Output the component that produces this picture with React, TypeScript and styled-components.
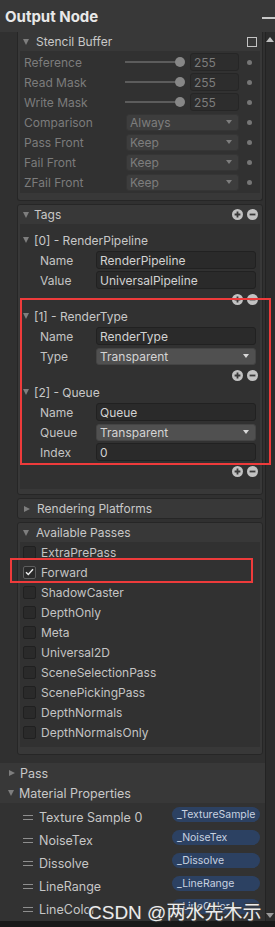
import React from 'react';
import styled, { createGlobalStyle } from 'styled-components';

const GlobalStyle = createGlobalStyle`
  html, body {
    margin: 0;
    padding: 0;
    background: #1e1e1e;
  }
  body {
    font-family: Inter, "Noto Sans", sans-serif;
    font-size: 12px;
  }
  * {
    box-sizing: border-box;
  }
`;

const Window = styled.div`
  position: relative;
  width: 275px;
  height: 927px;
  display: flex;
  flex-direction: column;
  background: #2f2f2f;
  color: #c4c4c4;
  overflow: hidden;
`;

const TitleBar = styled.div`
  flex: none;
  height: 32px;
  display: flex;
  align-items: center;
  justify-content: space-between;
  padding-left: 5px;
  background: #383838;
`;

const Title = styled.h1`
  margin: 0;
  font-size: 15px;
  font-weight: 700;
  color: #e8e8e8;
`;

const CollapseDash = styled.span`
  width: 13px;
  height: 2px;
  margin-top: 4px;
  background: #c8c8c8;
`;

const Body = styled.div`
  flex: 1;
  min-height: 0;
  display: flex;
`;

const ScrollView = styled.div`
  width: 265px;
  flex: none;
  display: flex;
  flex-direction: column;
  overflow: hidden;
`;

const Scrollbar = styled.div`
  flex: 1;
  display: flex;
  flex-direction: column;
  justify-content: space-between;
  align-items: flex-end;
  padding: 5px 1px 3px 0;
  background: #2c2c2c;
  border-left: 1px solid #232323;
`;

const ScrollArrow = styled.span<{ $down?: boolean }>`
  width: 0;
  height: 0;
  border-left: 4px solid transparent;
  border-right: 4px solid transparent;
  ${(p) => (p.$down ? 'border-top: 5px solid #9a9a9a;' : 'border-bottom: 5px solid #c0c0c0;')}
`;

const BottomStrip = styled.div`
  flex: none;
  height: 6px;
  background: #191919;
`;

const PanelArea = styled.div`
  display: flex;
  flex-direction: column;
  gap: 3px;
  padding: 0 2px 8px 17px;
  background: #303030;
`;

const Panel = styled.section<{ $cut?: boolean }>`
  background: #383838;
  border: 1px solid #262626;
  border-radius: 3px;
  ${(p) => p.$cut && 'border-top: none; border-top-left-radius: 0; border-top-right-radius: 0;'}
`;

const PanelHeader = styled.div`
  height: 19px;
  display: flex;
  align-items: center;
  padding: 0 4px 0 5px;
`;

const Arrow = styled.span<{ $open?: boolean }>`
  flex: none;
  width: 0;
  height: 0;
  ${(p) =>
    p.$open
      ? 'border-left: 3.5px solid transparent; border-right: 3.5px solid transparent; border-top: 6px solid #7e7e7e;'
      : 'border-top: 3.5px solid transparent; border-bottom: 3.5px solid transparent; border-left: 6px solid #7e7e7e; margin-left: 1px;'}
`;

const HeaderText = styled.span<{ $gap?: number }>`
  margin-left: ${(p) => p.$gap ?? 7}px;
  color: #c8c8c8;
  white-space: nowrap;
`;

const HeaderEnd = styled.div`
  margin-left: auto;
  display: flex;
  align-items: center;
  gap: 4px;
`;

const ToggleBox = styled.span`
  width: 10px;
  height: 10px;
  margin-right: 1px;
  border: 1px solid #c4c4c4;
`;

const PanelInner = styled.div<{ $pt?: number; $pb?: number; $mb?: number }>`
  margin: 0 2px ${(p) => p.$mb ?? 6}px 2px;
  padding: ${(p) => p.$pt ?? 1}px 0 ${(p) => p.$pb ?? 1}px 0;
  background: #313131;
`;

const PropRow = styled.div<{ $indent: number }>`
  height: 20px;
  display: flex;
  align-items: center;
  padding-left: ${(p) => p.$indent}px;
`;

const PropLabel = styled.span<{ $width: number; $dim?: boolean }>`
  flex: none;
  width: ${(p) => p.$width}px;
  color: ${(p) => (p.$dim ? '#7c7c7c' : '#c4c4c4')};
  white-space: nowrap;
`;

const Control = styled.div`
  width: 114px;
  flex: none;
  display: flex;
  align-items: center;
`;

const Track = styled.span`
  width: 52px;
  height: 2px;
  background: #5c5c5c;
`;

const Knob = styled.span`
  width: 10px;
  height: 10px;
  margin-left: -2px;
  border-radius: 50%;
  background: #878787;
`;

const NumberField = styled.span`
  width: 49px;
  height: 18px;
  margin-left: 5px;
  display: flex;
  align-items: center;
  padding-left: 3px;
  background: #2d2d2d;
  border: 1px solid #262626;
  border-radius: 3px;
  color: #7c7c7c;
`;

const Dot = styled.span`
  width: 5px;
  height: 5px;
  margin-left: 8px;
  border-radius: 50%;
  background: #767676;
`;

const TextField = styled.span`
  width: 160px;
  height: 18px;
  display: flex;
  align-items: center;
  padding-left: 3px;
  background: #2a2a2a;
  border: 1px solid #212121;
  border-radius: 3px;
  color: #d2d2d2;
`;

const Dropdown = styled.span<{ $dim?: boolean; $width: number }>`
  width: ${(p) => p.$width}px;
  height: 17px;
  margin-left: ${(p) => (p.$dim ? 1 : 0)}px;
  display: flex;
  align-items: center;
  justify-content: space-between;
  padding: 0 6px 0 3px;
  background: ${(p) => (p.$dim ? '#3d3d3d' : '#505050')};
  border: 1px solid ${(p) => (p.$dim ? '#353535' : '#444444')};
  border-radius: 3px;
  color: ${(p) => (p.$dim ? '#7e7e7e' : '#d4d4d4')};

  &::after {
    content: '';
    border-left: 3.5px solid transparent;
    border-right: 3.5px solid transparent;
    border-top: 4px solid ${(p) => (p.$dim ? '#7e7e7e' : '#d8d8d8')};
  }
`;

const ButtonRow = styled.div`
  height: 16px;
  display: flex;
  justify-content: flex-end;
  align-items: flex-start;
  gap: 4px;
  padding: 4px 2px 0 0;
`;

const ItemHeader = styled.div`
  height: 20px;
  display: flex;
  align-items: center;
  padding-left: 3px;
`;

const PassRow = styled.div`
  height: 20px;
  display: flex;
  align-items: center;
  padding-left: 3px;
  color: #c4c4c4;
`;

const CheckBox = styled.span<{ $on?: boolean }>`
  width: 13px;
  height: 13px;
  margin-right: 5px;
  display: flex;
  align-items: center;
  justify-content: center;
  background: #2a2a2a;
  border: 1px solid ${(p) => (p.$on ? '#5e5e5e' : '#202020')};
  border-radius: 2px;
`;

const Section = styled.div`
  background: #383838;
`;

const SectionHeader = styled.div`
  height: 20px;
  display: flex;
  align-items: center;
  padding-left: 8px;
  font-size: 12.5px;
`;

const PropertyList = styled.div`
  flex: 1;
  padding-top: 3px;
  background: #323232;
`;

const PropertyRow = styled.div`
  height: 23px;
  display: flex;
  align-items: center;
  padding: 0 5px 0 23px;
  font-size: 12.5px;
  color: #c6c6c6;
`;

const Grip = styled.span`
  width: 10px;
  height: 5px;
  margin-right: 6px;
  border-top: 1.5px solid #8e8e8e;
  border-bottom: 1.5px solid #8e8e8e;
`;

const RefPill = styled.span`
  margin-left: auto;
  align-self: flex-start;
  margin-top: 1px;
  width: 88px;
  height: 15px;
  display: flex;
  align-items: center;
  padding-left: 5px;
  border-radius: 8px;
  background: #2c4162;
  color: #c8d2e0;
  font-size: 10.5px;
  white-space: nowrap;
  overflow: hidden;
`;

const Highlight = styled.div<{ $x: number; $y: number; $w: number; $h: number }>`
  position: absolute;
  left: ${(p) => p.$x}px;
  top: ${(p) => p.$y}px;
  width: ${(p) => p.$w}px;
  height: ${(p) => p.$h}px;
  border: 2px solid #ee3b3b;
  pointer-events: none;
`;

const Watermark = styled.div`
  position: absolute;
  left: 88px;
  top: 897px;
  font-family: "Liberation Sans", "Noto Sans CJK SC", sans-serif;
  font-size: 19px;
  color: #ececec;
  white-space: nowrap;
  text-shadow: 0 0 1px #444, 1px 1px 1px #3a3a3a, -1px -1px 1px #3a3a3a;
  pointer-events: none;
`;

function PlusMinus() {
  return (
    <>
      <svg width="11" height="11" viewBox="0 0 11 11">
        <circle cx="5.5" cy="5.5" r="5.5" fill="#c2c2c2" />
        <path d="M2.6 5.5h5.8M5.5 2.6v5.8" stroke="#3a3a3a" strokeWidth="1.8" />
      </svg>
      <svg width="11" height="11" viewBox="0 0 11 11">
        <circle cx="5.5" cy="5.5" r="5.5" fill="#c2c2c2" />
        <path d="M2.6 5.5h5.8" stroke="#3a3a3a" strokeWidth="1.8" />
      </svg>
    </>
  );
}

function Check() {
  return (
    <svg width="9" height="8" viewBox="0 0 9 8">
      <path d="M1 4.2l2.3 2.3L8 1.2" stroke="#eeeeee" strokeWidth="1.4" fill="none" />
    </svg>
  );
}

const slider = ['Reference', 'Read Mask', 'Write Mask'];
const stencilDrops: [string, string][] = [
  ['Comparison', 'Always'],
  ['Pass Front', 'Keep'],
  ['Fail Front', 'Keep'],
  ['ZFail Front', 'Keep'],
];

type Field = { label: string; value: string; drop?: boolean };
const tags: { title: string; fields: Field[] }[] = [
  {
    title: '[0] - RenderPipeline',
    fields: [
      { label: 'Name', value: 'RenderPipeline' },
      { label: 'Value', value: 'UniversalPipeline' },
    ],
  },
  {
    title: '[1] - RenderType',
    fields: [
      { label: 'Name', value: 'RenderType' },
      { label: 'Type', value: 'Transparent', drop: true },
    ],
  },
  {
    title: '[2] - Queue',
    fields: [
      { label: 'Name', value: 'Queue' },
      { label: 'Queue', value: 'Transparent', drop: true },
      { label: 'Index', value: '0' },
    ],
  },
];

const passes = [
  'ExtraPrePass',
  'Forward',
  'ShadowCaster',
  'DepthOnly',
  'Meta',
  'Universal2D',
  'SceneSelectionPass',
  'ScenePickingPass',
  'DepthNormals',
  'DepthNormalsOnly',
];

const properties: [string, string][] = [
  ['Texture Sample 0', '_TextureSample'],
  ['NoiseTex', '_NoiseTex'],
  ['Dissolve', '_Dissolve'],
  ['LineRange', '_LineRange'],
  ['LineColor', '_LineColor'],
];

function App(): JSX.Element {
  return (
    <Window>
      <GlobalStyle />
      <TitleBar>
        <Title>Output Node</Title>
        <CollapseDash />
      </TitleBar>
      <Body>
        <ScrollView>
          <PanelArea>
            <Panel $cut>
              <PanelHeader>
                <Arrow $open />
                <HeaderText>Stencil Buffer</HeaderText>
                <HeaderEnd>
                  <ToggleBox />
                </HeaderEnd>
              </PanelHeader>
              <PanelInner $mb={7}>
                {slider.map((s) => (
                  <PropRow key={s} $indent={4}>
                    <PropLabel $width={101} $dim>
                      {s}
                    </PropLabel>
                    <Control>
                      <Track />
                      <Knob />
                      <NumberField>255</NumberField>
                    </Control>
                    <Dot />
                  </PropRow>
                ))}
                {stencilDrops.map(([l, v]) => (
                  <PropRow key={l} $indent={4}>
                    <PropLabel $width={101} $dim>
                      {l}
                    </PropLabel>
                    <Control>
                      <Dropdown $dim $width={113}>
                        {v}
                      </Dropdown>
                    </Control>
                    <Dot />
                  </PropRow>
                ))}
              </PanelInner>
            </Panel>

            <Panel>
              <PanelHeader>
                <Arrow $open />
                <HeaderText $gap={5}>Tags</HeaderText>
                <HeaderEnd>
                  <PlusMinus />
                </HeaderEnd>
              </PanelHeader>
              <PanelInner $pt={6} $pb={11} $mb={5}>
                {tags.map((t) => (
                  <div key={t.title}>
                    <ItemHeader>
                      <Arrow $open />
                      <HeaderText $gap={5}>{t.title}</HeaderText>
                    </ItemHeader>
                    {t.fields.map((f) => (
                      <PropRow key={f.label} $indent={20}>
                        <PropLabel $width={56}>{f.label}</PropLabel>
                        {f.drop ? (
                          <Dropdown $width={160}>{f.value}</Dropdown>
                        ) : (
                          <TextField>{f.value}</TextField>
                        )}
                      </PropRow>
                    ))}
                    <ButtonRow>
                      <PlusMinus />
                    </ButtonRow>
                  </div>
                ))}
              </PanelInner>
            </Panel>

            <Panel>
              <PanelHeader>
                <Arrow />
                <HeaderText>Rendering Platforms</HeaderText>
              </PanelHeader>
            </Panel>

            <Panel>
              <PanelHeader>
                <Arrow $open />
                <HeaderText>Available Passes</HeaderText>
              </PanelHeader>
              <PanelInner $pt={0} $pb={5} $mb={7}>
                {passes.map((p) => (
                  <PassRow key={p}>
                    <CheckBox $on={p === 'Forward'}>{p === 'Forward' && <Check />}</CheckBox>
                    {p}
                  </PassRow>
                ))}
              </PanelInner>
            </Panel>
          </PanelArea>

          <Section>
            <SectionHeader>
              <Arrow />
              <HeaderText $gap={5}>Pass</HeaderText>
            </SectionHeader>
            <SectionHeader>
              <Arrow $open />
              <HeaderText $gap={5}>Material Properties</HeaderText>
            </SectionHeader>
          </Section>
          <PropertyList>
            {properties.map(([name, ref]) => (
              <PropertyRow key={name}>
                <Grip />
                {name}
                <RefPill>{ref}</RefPill>
              </PropertyRow>
            ))}
          </PropertyList>
        </ScrollView>
        <Scrollbar>
          <ScrollArrow />
          <ScrollArrow $down />
        </Scrollbar>
      </Body>
      <BottomStrip />

      <Highlight $x={20} $y={298} $w={251} $h={167} />
      <Highlight $x={10} $y={558} $w={243} $h={25} />
      <Watermark>CSDN @两水先木示</Watermark>
    </Window>
  );
}

export default App;
